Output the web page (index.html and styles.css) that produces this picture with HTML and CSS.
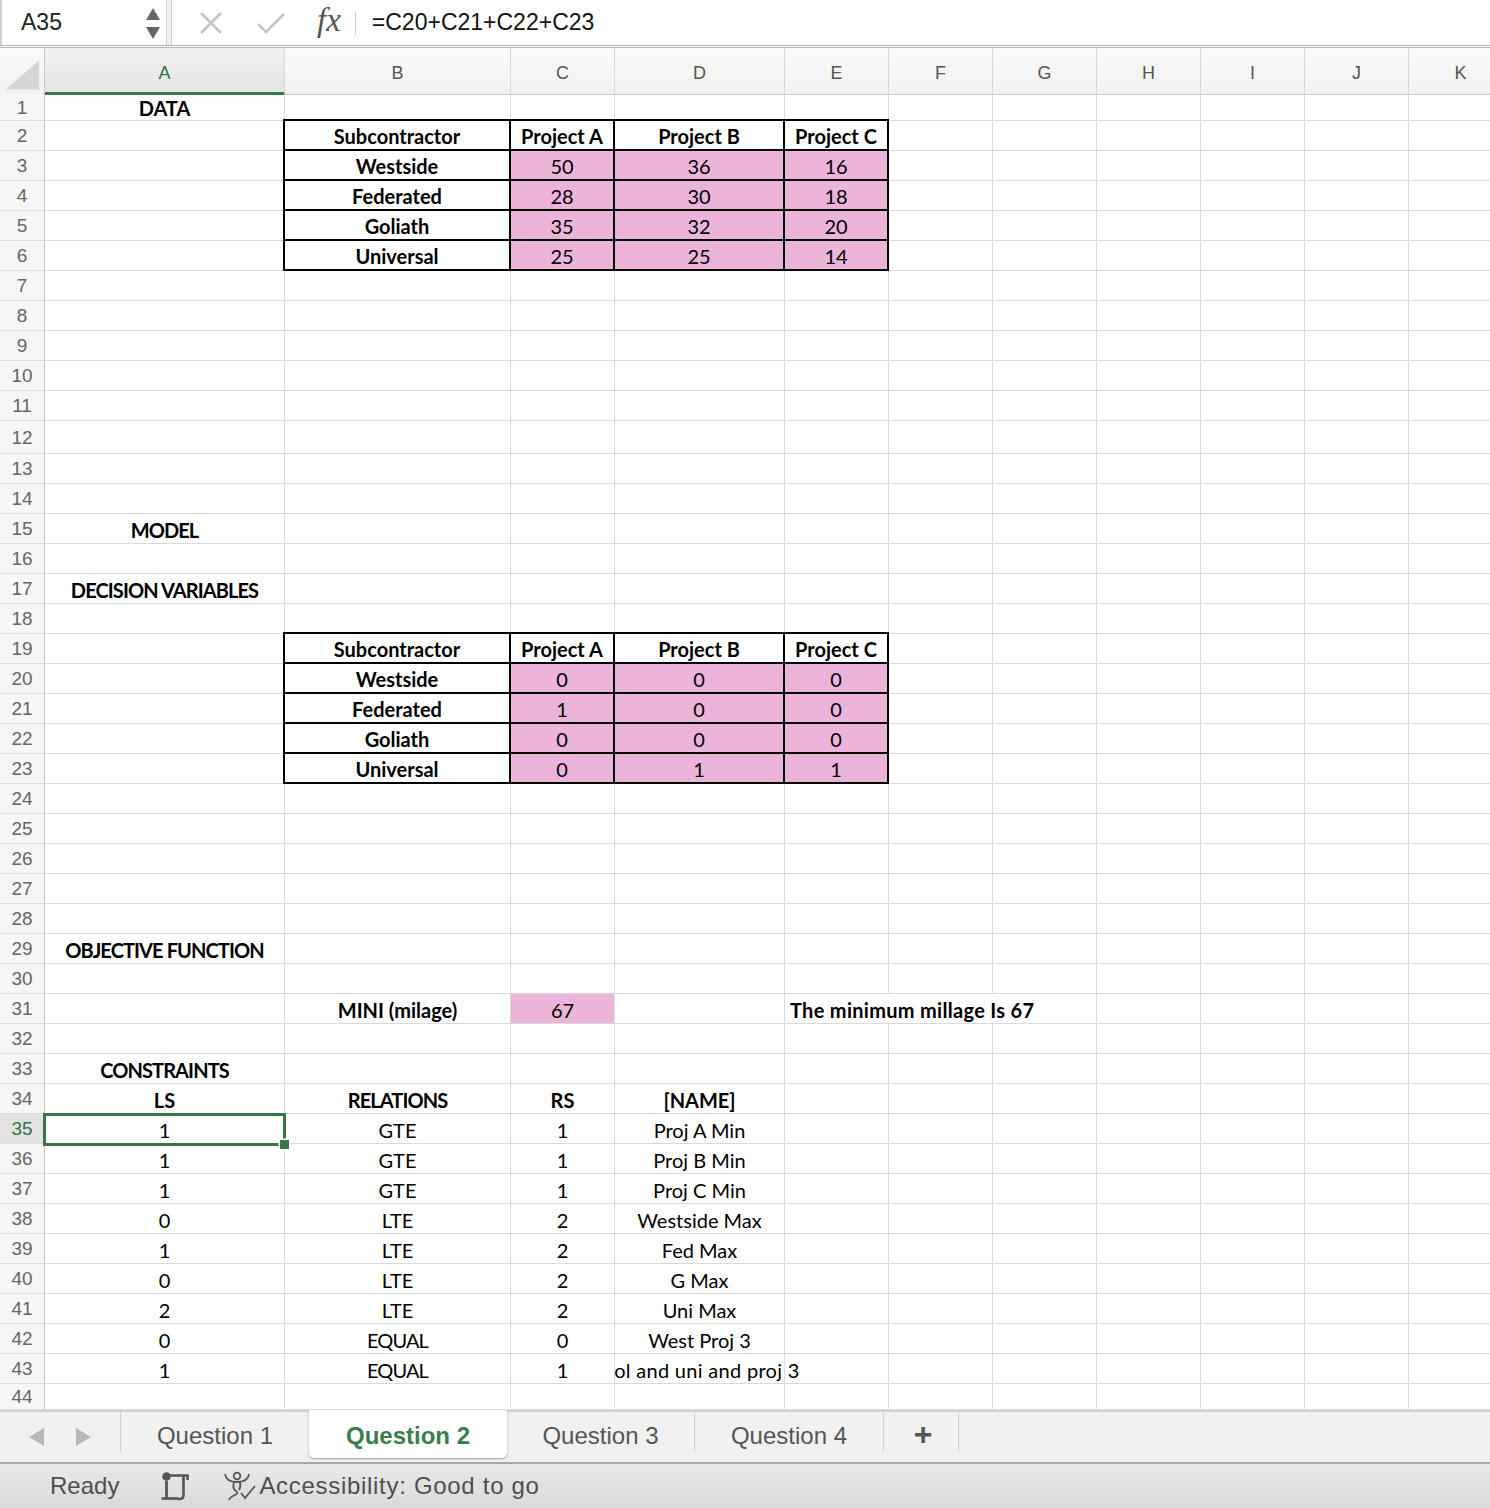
FILE: index.html
```html
<!DOCTYPE html>
<html>
<head>
<meta charset="utf-8">
<title>Question 2</title>
<link rel="stylesheet" href="styles.css">
</head>
<body>
<div class="fbar">
  <div class="namebox">
    <span>A35</span>
    <span class="spin">
      <svg width="14" height="12" viewBox="0 0 14 12"><path d="M7 0 L14 12 L0 12 Z" fill="#666"/></svg>
      <svg width="14" height="12" viewBox="0 0 14 12"><path d="M0 0 L14 0 L7 12 Z" fill="#666"/></svg>
    </span>
  </div>
  <div class="nsep"></div>
  <svg class="ico-x" width="24" height="24" viewBox="0 0 24 24"><path d="M2 2 L22 22 M22 2 L2 22" stroke="#c4c4c4" stroke-width="2.6" fill="none"/></svg>
  <svg class="ico-ok" width="30" height="24" viewBox="0 0 30 24"><path d="M2 13 L10 21 L28 3" stroke="#c4c4c4" stroke-width="2.6" fill="none"/></svg>
  <span class="fx">fx</span>
  <span class="fsep"></span>
  <span class="formula">=C20+C21+C22+C23</span>
</div>

<div class="sheet">
  <div class="row hdr">
    <div class="corner"><svg width="45" height="46" viewBox="0 0 45 46"><path d="M6 42 L40 42 L40 12 Z" fill="#d6d6d6"/></svg></div>
    <div class="on">A</div><div>B</div><div>C</div><div>D</div><div>E</div><div>F</div><div>G</div><div>H</div><div>I</div><div>J</div><div>K</div>
  </div>

  <div class="row r27"><div class="rh">1</div><div class="b">DATA</div><div></div><div></div><div></div><div></div><div></div><div></div><div></div><div></div><div></div><div></div></div>
  <div class="row"><div class="rh">2</div><div></div><div class="t tl tt b">Subcontractor</div><div class="t tt b">Project A</div><div class="t tt b">Project B</div><div class="t tt b">Project C</div><div></div><div></div><div></div><div></div><div></div><div></div></div>
  <div class="row"><div class="rh">3</div><div></div><div class="t tl b">Westside</div><div class="t pk">50</div><div class="t pk">36</div><div class="t pk">16</div><div></div><div></div><div></div><div></div><div></div><div></div></div>
  <div class="row"><div class="rh">4</div><div></div><div class="t tl b">Federated</div><div class="t pk">28</div><div class="t pk">30</div><div class="t pk">18</div><div></div><div></div><div></div><div></div><div></div><div></div></div>
  <div class="row"><div class="rh">5</div><div></div><div class="t tl b">Goliath</div><div class="t pk">35</div><div class="t pk">32</div><div class="t pk">20</div><div></div><div></div><div></div><div></div><div></div><div></div></div>
  <div class="row"><div class="rh">6</div><div></div><div class="t tl b">Universal</div><div class="t pk">25</div><div class="t pk">25</div><div class="t pk">14</div><div></div><div></div><div></div><div></div><div></div><div></div></div>
  <div class="row"><div class="rh">7</div><div></div><div></div><div></div><div></div><div></div><div></div><div></div><div></div><div></div><div></div><div></div></div>
  <div class="row"><div class="rh">8</div><div></div><div></div><div></div><div></div><div></div><div></div><div></div><div></div><div></div><div></div><div></div></div>
  <div class="row"><div class="rh">9</div><div></div><div></div><div></div><div></div><div></div><div></div><div></div><div></div><div></div><div></div><div></div></div>
  <div class="row"><div class="rh">10</div><div></div><div></div><div></div><div></div><div></div><div></div><div></div><div></div><div></div><div></div><div></div></div>
  <div class="row"><div class="rh">11</div><div></div><div></div><div></div><div></div><div></div><div></div><div></div><div></div><div></div><div></div><div></div></div>
  <div class="row r33"><div class="rh">12</div><div></div><div></div><div></div><div></div><div></div><div></div><div></div><div></div><div></div><div></div><div></div></div>
  <div class="row"><div class="rh">13</div><div></div><div></div><div></div><div></div><div></div><div></div><div></div><div></div><div></div><div></div><div></div></div>
  <div class="row"><div class="rh">14</div><div></div><div></div><div></div><div></div><div></div><div></div><div></div><div></div><div></div><div></div><div></div></div>
  <div class="row"><div class="rh">15</div><div class="b caps">MODEL</div><div></div><div></div><div></div><div></div><div></div><div></div><div></div><div></div><div></div><div></div></div>
  <div class="row"><div class="rh">16</div><div></div><div></div><div></div><div></div><div></div><div></div><div></div><div></div><div></div><div></div><div></div></div>
  <div class="row"><div class="rh">17</div><div class="b caps">DECISION VARIABLES</div><div></div><div></div><div></div><div></div><div></div><div></div><div></div><div></div><div></div><div></div></div>
  <div class="row"><div class="rh">18</div><div></div><div></div><div></div><div></div><div></div><div></div><div></div><div></div><div></div><div></div><div></div></div>
  <div class="row"><div class="rh">19</div><div></div><div class="t tl tt b">Subcontractor</div><div class="t tt b">Project A</div><div class="t tt b">Project B</div><div class="t tt b">Project C</div><div></div><div></div><div></div><div></div><div></div><div></div></div>
  <div class="row"><div class="rh">20</div><div></div><div class="t tl b">Westside</div><div class="t pk">0</div><div class="t pk">0</div><div class="t pk">0</div><div></div><div></div><div></div><div></div><div></div><div></div></div>
  <div class="row"><div class="rh">21</div><div></div><div class="t tl b">Federated</div><div class="t pk">1</div><div class="t pk">0</div><div class="t pk">0</div><div></div><div></div><div></div><div></div><div></div><div></div></div>
  <div class="row"><div class="rh">22</div><div></div><div class="t tl b">Goliath</div><div class="t pk">0</div><div class="t pk">0</div><div class="t pk">0</div><div></div><div></div><div></div><div></div><div></div><div></div></div>
  <div class="row"><div class="rh">23</div><div></div><div class="t tl b">Universal</div><div class="t pk">0</div><div class="t pk">1</div><div class="t pk">1</div><div></div><div></div><div></div><div></div><div></div><div></div></div>
  <div class="row"><div class="rh">24</div><div></div><div></div><div></div><div></div><div></div><div></div><div></div><div></div><div></div><div></div><div></div></div>
  <div class="row"><div class="rh">25</div><div></div><div></div><div></div><div></div><div></div><div></div><div></div><div></div><div></div><div></div><div></div></div>
  <div class="row"><div class="rh">26</div><div></div><div></div><div></div><div></div><div></div><div></div><div></div><div></div><div></div><div></div><div></div></div>
  <div class="row"><div class="rh">27</div><div></div><div></div><div></div><div></div><div></div><div></div><div></div><div></div><div></div><div></div><div></div></div>
  <div class="row"><div class="rh">28</div><div></div><div></div><div></div><div></div><div></div><div></div><div></div><div></div><div></div><div></div><div></div></div>
  <div class="row"><div class="rh">29</div><div class="b caps">OBJECTIVE FUNCTION</div><div></div><div></div><div></div><div></div><div></div><div></div><div></div><div></div><div></div><div></div></div>
  <div class="row"><div class="rh">30</div><div></div><div></div><div></div><div></div><div></div><div></div><div></div><div></div><div></div><div></div><div></div></div>
  <div class="row"><div class="rh">31</div><div></div><div class="b">MINI (milage)</div><div class="pk">67</div><div></div><div class="ov b">The minimum millage Is 67</div><div></div><div></div><div></div><div></div></div>
  <div class="row"><div class="rh">32</div><div></div><div></div><div></div><div></div><div></div><div></div><div></div><div></div><div></div><div></div><div></div></div>
  <div class="row"><div class="rh">33</div><div class="b caps">CONSTRAINTS</div><div></div><div></div><div></div><div></div><div></div><div></div><div></div><div></div><div></div><div></div></div>
  <div class="row"><div class="rh">34</div><div class="b">LS</div><div class="b caps">RELATIONS</div><div class="b">RS</div><div class="b">[NAME]</div><div></div><div></div><div></div><div></div><div></div><div></div><div></div></div>
  <div class="row"><div class="rh on">35</div><div class="sel">1</div><div>GTE</div><div>1</div><div>Proj A Min</div><div></div><div></div><div></div><div></div><div></div><div></div><div></div></div>
  <div class="row"><div class="rh">36</div><div>1</div><div>GTE</div><div>1</div><div>Proj B Min</div><div></div><div></div><div></div><div></div><div></div><div></div><div></div></div>
  <div class="row"><div class="rh">37</div><div>1</div><div>GTE</div><div>1</div><div>Proj C Min</div><div></div><div></div><div></div><div></div><div></div><div></div><div></div></div>
  <div class="row"><div class="rh">38</div><div>0</div><div>LTE</div><div>2</div><div>Westside Max</div><div></div><div></div><div></div><div></div><div></div><div></div><div></div></div>
  <div class="row"><div class="rh">39</div><div>1</div><div>LTE</div><div>2</div><div>Fed Max</div><div></div><div></div><div></div><div></div><div></div><div></div><div></div></div>
  <div class="row"><div class="rh">40</div><div>0</div><div>LTE</div><div>2</div><div>G Max</div><div></div><div></div><div></div><div></div><div></div><div></div><div></div></div>
  <div class="row"><div class="rh">41</div><div>2</div><div>LTE</div><div>2</div><div>Uni Max</div><div></div><div></div><div></div><div></div><div></div><div></div><div></div></div>
  <div class="row"><div class="rh">42</div><div>0</div><div class="caps">EQUAL</div><div>0</div><div>West Proj 3</div><div></div><div></div><div></div><div></div><div></div><div></div><div></div></div>
  <div class="row"><div class="rh">43</div><div>1</div><div class="caps">EQUAL</div><div>1</div><div class="clip">Gol and uni and proj 3</div><div></div><div></div><div></div><div></div><div></div><div></div><div></div></div>
  <div class="row r26"><div class="rh">44</div><div></div><div></div><div></div><div></div><div></div><div></div><div></div><div></div><div></div><div></div><div></div></div>
</div>

<div class="tabs">
  <div class="nav">
    <svg width="16" height="18" viewBox="0 0 16 18"><path d="M15 0 L15 18 L0 9 Z" fill="#b9b9b9"/></svg>
    <svg width="16" height="18" viewBox="0 0 16 18"><path d="M1 0 L1 18 L16 9 Z" fill="#b9b9b9"/></svg>
  </div>
  <div class="tab w189">Question 1</div>
  <div class="tab active">Question 2</div>
  <div class="tab w188">Question 3</div>
  <div class="tab w189">Question 4</div>
  <div class="tab add">+</div>
</div>

<div class="status">
  <span class="ready">Ready</span>
  <svg class="ico-macro" width="32" height="30" viewBox="0 0 32 30">
    <circle cx="6.5" cy="5.5" r="4.3" fill="#555"/>
    <path d="M10 4.5 H27.5 V9" stroke="#555" stroke-width="2.6" fill="none"/>
    <path d="M23.5 5 V24 Q23.5 28 19.5 28 H17" stroke="#555" stroke-width="2.6" fill="none"/>
    <path d="M6.5 10 V27.5" stroke="#555" stroke-width="2.8" fill="none"/>
    <path d="M1.5 27.5 H18" stroke="#555" stroke-width="2.6" fill="none"/>
  </svg>
  <svg class="ico-acc" width="36" height="30" viewBox="0 0 36 30">
    <circle cx="15" cy="5" r="3.3" stroke="#555" stroke-width="1.8" fill="none"/>
    <path d="M3 3 Q4 11 15 11 Q26 11 27 3" stroke="#555" stroke-width="1.8" fill="none"/>
    <path d="M12 11 Q10 18 14 20 Q17 22 13 24 Q8 26 7 29" stroke="#555" stroke-width="1.8" fill="none"/>
    <path d="M18 11 Q19 16 17 19" stroke="#555" stroke-width="1.8" fill="none"/>
    <path d="M19 22 L23 27 L33 15" stroke="#555" stroke-width="1.8" fill="none"/>
  </svg>
  <span class="acc">Accessibility: Good to go</span>
</div>
</body>
</html>
```
FILE: styles.css
```css
* { box-sizing: border-box; }
html, body { margin: 0; padding: 0; }
body {
  width: 1490px;
  height: 1508px;
  overflow: hidden;
  background: #fff;
  font-family: "Liberation Sans", Arial, sans-serif;
  display: flex;
  flex-direction: column;
}

/* formula bar */
.fbar {
  flex: none;
  height: 48px;
  display: flex;
  align-items: center;
  border-bottom: 3px double #b3b3b3;
  background: #fff;
}
.namebox {
  width: 166px;
  height: 100%;
  display: flex;
  align-items: center;
  justify-content: space-between;
  padding: 0 6px 0 19px;
  font-size: 23px;
  color: #222;
  border-left: 2px solid #cfcfcf;
}
.spin { display: flex; flex-direction: column; gap: 7px; padding-top: 2px; }
.spin svg { display: block; }
.nsep {
  width: 6px;
  height: 100%;
  border-left: 1px solid #d0d0d0;
  border-right: 1px solid #d0d0d0;
  background: #f1f1f1;
}
.ico-x { margin-left: 27px; }
.ico-ok { margin-left: 33px; }
.fx {
  margin-left: 31px;
  font-family: "Liberation Serif", "Times New Roman", serif;
  font-style: italic;
  font-size: 33px;
  color: #555;
  line-height: 1;
  margin-top: -5px;
}
.fsep {
  width: 1px;
  height: 24px;
  background: #d0d0d0;
  margin-left: 14px;
}
.formula {
  margin-left: 16px;
  font-size: 23px;
  color: #111;
}

/* sheet */
.sheet {
  flex: none;
  height: 1362px;
  overflow: hidden;
  position: relative;
}
.row {
  display: grid;
  grid-template-columns: 45px 240px 226px 104px 170px 104px 104px 104px 104px 104px 104px 104px;
  height: 30px;
}
.r27 { height: 27px; }
.r33 { height: 33px; }
.r26 { height: 26px; }
.row > div {
  border-right: 1px solid #d9d9d9;
  border-bottom: 1px solid #d9d9d9;
  display: flex;
  align-items: center;
  justify-content: center;
  font-family: Lato, "Noto Sans", sans-serif;
  font-size: 20px;
  color: #000;
  white-space: nowrap;
  padding-top: 2px;
}
.row > .rh {
  background: #f7f7f7;
  border-right: 1px solid #c9c9c9;
  border-bottom: 1px solid #dedede;
  font-family: "Liberation Sans", Arial, sans-serif;
  font-size: 19px;
  color: #666;
  padding-top: 1px;
}
.row > .rh.on {
  background: #e3e3e3;
  color: #2f7447;
}

.hdr { height: 46px; }
.hdr > div {
  background: linear-gradient(#fbfbfb, #f1f1f1);
  border-right: 1px solid #dadada;
  border-bottom: 1px solid #c6c6c6;
  font-family: "Liberation Sans", Arial, sans-serif;
  font-size: 18px;
  color: #555;
  padding-top: 4px;
}
.hdr > .corner {
  padding: 0;
  border-right: 1px solid #c9c9c9;
  align-items: stretch;
}
.hdr > .on {
  background: linear-gradient(#f0f0f0, #e6e6e6);
  color: #2f7447;
  border-bottom: 3px solid #3a7548;
  padding-top: 6px;
}

.row > .b { font-weight: 700; }
.row > .caps { letter-spacing: -0.9px; }
.row > .pk { background: #ecb4d9; }

.row > .t {
  border-right: 2px solid #000;
  border-bottom: 2px solid #000;
}
.row > .tl { box-shadow: -2px 0 0 #000; }
.row > .tt { box-shadow: 0 -2px 0 #000; }
.row > .tl.tt { box-shadow: -2px 0 0 #000, 0 -2px 0 #000, -2px -2px 0 #000; }

.row > .ov {
  grid-column: span 3;
  justify-content: flex-start;
  padding-left: 5px;
  letter-spacing: 0.3px;
}
.row > .clip {
  overflow: visible;
  clip-path: inset(0 -400px 0 0);
  letter-spacing: 0.3px;
}

.row > .sel { position: relative; }
.row > .sel::after {
  content: "";
  position: absolute;
  left: -2px;
  top: -1px;
  right: -2px;
  bottom: -3px;
  border: 3px solid #3a7548;
  z-index: 2;
}
.row > .sel::before {
  content: "";
  position: absolute;
  right: -5px;
  bottom: -6px;
  width: 9px;
  height: 9px;
  background: #3a7548;
  box-shadow: 0 0 0 1.5px #fff;
  z-index: 3;
}

/* sheet tabs */
.tabs {
  flex: none;
  height: 52px;
  display: flex;
  align-items: flex-start;
  background: #f1f1f1;
  border-top: 2px solid #d3d3d3;
}
.nav {
  width: 121px;
  height: 40px;
  display: flex;
  align-items: center;
  gap: 30px;
  padding-left: 29px;
  padding-top: 10px;
  border-right: 1px solid #d0d0d0;
}
.tab {
  height: 40px;
  display: flex;
  align-items: center;
  justify-content: center;
  font-size: 24px;
  color: #555;
  border-right: 1px solid #d0d0d0;
  padding-top: 8px;
}
.w189 { width: 189px; }
.w188 { width: 188px; }
.tab.active {
  width: 198px;
  height: 48px;
  margin-top: -2px;
  margin-left: -1px;
  background: #fff;
  color: #3a7d4e;
  font-weight: 700;
  border-right: none;
  border-radius: 0 0 5px 5px;
  box-shadow: 0 1px 2px rgba(0, 0, 0, 0.35);
  padding-top: 4px;
}
.tab.add {
  width: 75px;
  font-size: 32px;
  font-weight: 700;
  color: #555;
  padding-top: 4px;
  padding-left: 4px;
}

/* status bar */
.status {
  flex: 1;
  display: flex;
  align-items: center;
  background: linear-gradient(#e9e9e9, #dadada);
  border-top: 2px solid #a8a8a8;
  font-size: 24px;
  color: #4f4f4f;
}
.ready { margin-left: 50px; }
.ico-macro { margin-left: 41px; }
.ico-acc { margin-left: 30px; }
.acc { margin-left: 1px; letter-spacing: 0.7px; }
```
